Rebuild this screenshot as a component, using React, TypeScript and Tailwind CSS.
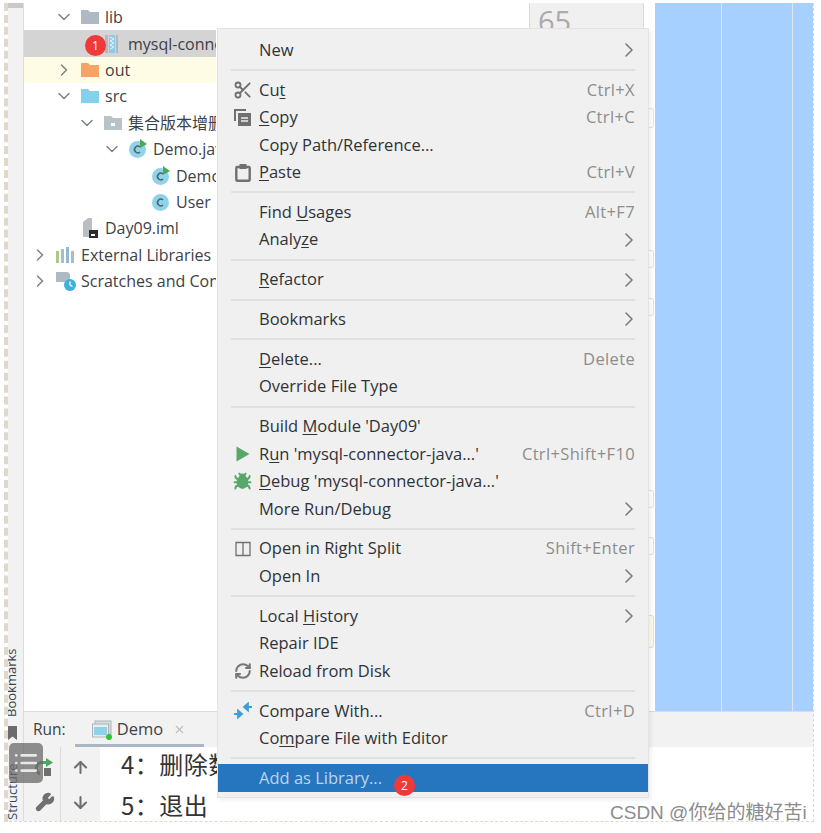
import React from "react";
import { ChevronRight, ChevronDown, RefreshCw, ArrowUp, ArrowDown, X, Wrench, Bug, List, Scissors } from "lucide-react";

const font = "[font-family:'Open_Sans','Noto_Sans_CJK_SC',sans-serif]";

function U({ children }: { children: React.ReactNode }) {
  return <span className="underline underline-offset-2">{children}</span>;
}

function Row({ icon, label, shortcut, arrow, active }: { icon?: React.ReactNode; label: React.ReactNode; shortcut?: string; arrow?: boolean; active?: boolean }) {
  return (
    <div className={`h-[27.5px] flex items-center pr-[13px] ${active ? "bg-[#2675bf] text-[#bcd6ee]" : "text-[#2f3338]"}`}>
      <div className="w-[41px] flex justify-center pl-[8px] shrink-0">{icon}</div>
      <div className="flex-1 text-[16.5px] whitespace-nowrap">{label}</div>
      {shortcut && <div className="text-[16.5px] tracking-[0.35px] text-[#8d8d8d]">{shortcut}</div>}
      {arrow && <ChevronRight size={24} strokeWidth={1.5} className="text-[#777777] mr-[-6px]" />}
    </div>
  );
}

const Sep = () => (
  <div className="h-[12.3px] flex items-center px-[13px]">
    <div className="h-[2px] w-full bg-[#e0e0e0]" />
  </div>
);

function Folder({ color, dot }: { color: string; dot?: boolean }) {
  return (
    <svg width="20" height="16" viewBox="0 0 20 16">
      <path d="M1 1h7l2 2h9v12H1z" fill={color} />
      {dot && <rect x="8" y="8" width="4" height="3" fill="#fff" />}
    </svg>
  );
}

function ClassIcon({ run }: { run?: boolean }) {
  return (
    <svg width="20" height="20" viewBox="0 0 20 20">
      <circle cx="9.5" cy="10.5" r="8.5" fill="#8fd3ea" />
      <path d="M12 8a3.3 3.3 0 1 0 0 5" fill="none" stroke="#52626c" strokeWidth="1.6" />
      {run && <path d="M12 0l7 5-7 4z" fill="#4ca75c" />}
    </svg>
  );
}

function TreeRow({ indent, chevron, icon, label, className = "" }: { indent: number; chevron?: "r" | "d"; icon: React.ReactNode; label: string; className?: string }) {
  return (
    <div className={`h-[26.4px] flex items-center whitespace-nowrap overflow-hidden text-[16px] text-[#3d4247] ${className}`} style={{ paddingLeft: indent }}>
      <div className="w-[24px] shrink-0 flex items-center">
        {chevron === "r" && <ChevronRight size={20} strokeWidth={1.8} className="text-[#7c8287] -ml-[2px]" />}
        {chevron === "d" && <ChevronDown size={20} strokeWidth={1.8} className="text-[#7c8287] -ml-[2px]" />}
      </div>
      <div className="mr-[5px] flex items-center shrink-0">{icon}</div>
      <span>{label}</span>
    </div>
  );
}

function BlueColumn({ className }: { className: string }) {
  return <div className={`bg-[#a6d0ff] ${className}`} />;
}

const gray = "#707070";

export default function App() {
  return (
    <div className={`relative w-[821px] h-[833px] bg-white overflow-hidden ${font}`}>
      <div className="ml-[4px] mt-[3px] w-[810px] h-[819px] flex border-l-[4px] border-b border-r border-dashed border-[#ded9cc]">
        {/* left strip */}
        <div className="relative w-[16px] bg-[#f2f2f2] border-r border-[#dcdcdc] shrink-0 overflow-hidden">
          <div className="h-[5px] w-[15px] bg-[#c9c9c9]" />
          <div className="absolute left-[-1px] top-[645px] h-[70px] w-[11px] flex items-center justify-center">
            <span className="rotate-[-90deg] text-[13px] text-[#3d4247] whitespace-nowrap">Bookmarks</span>
          </div>
          <svg className="absolute left-0 top-[723px]" width="9" height="14" viewBox="0 0 9 14">
            <path d="M0 0h9v14L4.500 10.500 0 14z" fill="#6b6b6b" />
          </svg>
          <div className="absolute left-[-1px] top-[760px] h-[58px] w-[11px] flex items-center justify-center">
            <span className="rotate-[-90deg] text-[13px] text-[#33475c] whitespace-nowrap">Structure</span>
          </div>
        </div>

        <div className="flex-1 flex flex-col min-w-0">
          <div className="flex-1 flex min-h-0">
            {/* project tree */}
            <div className="w-[192px] bg-white shrink-0 pt-[1px]">
              <TreeRow indent={32} chevron="d" icon={<Folder color="#aeb9c1" />} label="lib" />
              <TreeRow indent={55} icon={<svg width="20" height="20" viewBox="0 0 20 20"><rect x="2" y="1" width="3" height="18" fill="#aeb9c1" /><rect x="6" y="1" width="6" height="18" fill="#8fcbe6" /><path d="M7 3l4 2-4 2 4 2-4 2 4 2-4 2" fill="none" stroke="#e8f4fa" /><rect x="13" y="1" width="2" height="18" fill="#aeb9c1" /></svg>} label="mysql-connector-java" className="bg-[#d4d4d4]" />
              <TreeRow indent={32} chevron="r" icon={<Folder color="#f4a565" />} label="out" className="bg-[#fefce4]" />
              <TreeRow indent={32} chevron="d" icon={<Folder color="#84d1ee" />} label="src" />
              <TreeRow indent={55} chevron="d" icon={<Folder color="#b8c2c9" dot />} label="集合版本增删改查" />
              <TreeRow indent={80} chevron="d" icon={<ClassIcon run />} label="Demo.java" />
              <TreeRow indent={103} icon={<ClassIcon run />} label="Demo" />
              <TreeRow indent={103} icon={<ClassIcon />} label="User" />
              <TreeRow indent={32} icon={<svg width="20" height="20" viewBox="0 0 20 20"><path d="M3 4l5-4h4v19H3z" fill="#b7bfc5" /><rect x="9" y="12" width="9" height="8" fill="#2b2b2b" /><rect x="11" y="16" width="4" height="2" fill="#fff" /></svg>} label="Day09.iml" />
              <TreeRow indent={8} chevron="r" icon={<svg width="20" height="18" viewBox="0 0 20 18"><rect x="0" y="5" width="3" height="12" fill="#a6c98c" /><rect x="5" y="3" width="3" height="14" fill="#aeb9c1" /><rect x="10" y="1" width="3" height="16" fill="#8fb9d6" /><rect x="15" y="5" width="3" height="12" fill="#aeb9c1" /></svg>} label="External Libraries" />
              <TreeRow indent={8} chevron="r" icon={<svg width="20" height="20" viewBox="0 0 20 20"><path d="M0 1h12l2 2v8H0z" fill="#aeb9c1" /><circle cx="14" cy="14" r="6" fill="#3fb0dc" /><path d="M14 10.500V14l2.500 1.500" stroke="#fff" fill="none" strokeWidth="1.3" /></svg>} label="Scratches and Consoles" />
            </div>

            {/* editor */}
            <div className="flex-1 bg-white flex min-w-0">
              <div className="w-[313px] shrink-0" />
              <div className="w-[115px] h-[60px] bg-[#f0f0f0] border-x border-[#d9d9d9] text-[29px] text-[#ababab] pl-[8px] leading-[36px] shrink-0">65</div>
              <div className="w-[11px] shrink-0" />
              <div className="flex-1 flex gap-[1px] bg-[#dbe6f0]">
                <BlueColumn className="w-[66px]" />
                <BlueColumn className="w-[70px]" />
                <BlueColumn className="flex-1" />
              </div>
            </div>
          </div>

          {/* run bar */}
          <div className="h-[36px] bg-[#f2f2f2] border-t border-[#dcdcdc] flex items-center shrink-0 text-[#3d4247]">
            <span className="ml-[9px] text-[15.500px]">Run:</span>
            <div className="relative ml-[25px] h-full flex items-center px-[1px]">
              <svg width="20" height="20" viewBox="0 0 20 20"><rect x="3" y="1" width="16" height="13" fill="#d7dcdf" stroke="#aeb4b8" /><rect x="0.5" y="4" width="16" height="13" fill="#e8edf0" stroke="#aeb4b8" /><rect x="2" y="7" width="13" height="8" fill="#8fd3ea" /><circle cx="17" cy="17" r="3" fill="#2fc52f" /></svg>
              <span className="ml-[5px] text-[16.500px]">Demo</span>
              <X size={13} className="ml-[10px] text-[#b9bdc0]" />
              <div className="absolute left-[-16px] right-[-17px] bottom-0 h-[3px] bg-[#aab6c4]" />
            </div>
          </div>

          {/* console */}
          <div className="h-[74px] flex shrink-0">
            <div className="w-[37px] bg-[#f2f2f2] border-r border-[#dcdcdc] flex flex-col items-center justify-end pb-[9px] pl-[6px] shrink-0">
              <Wrench size={20} fill={gray} className="text-[#707070]" />
            </div>
            <div className="w-[39px] bg-[#f2f2f2] flex flex-col items-center justify-between pt-[11px] pb-[9px] shrink-0">
              <ArrowUp size={19} strokeWidth={2.6} className="text-[#6e6e6e]" />
              <ArrowDown size={19} strokeWidth={2.6} className="text-[#6e6e6e]" />
            </div>
            <div className="flex-1 bg-white pl-[21px] text-[24px] tracking-[0.5px] leading-[41px] text-[#333333] [font-family:'Noto_Sans_CJK_SC',sans-serif] whitespace-nowrap overflow-hidden">
              <div className="-mt-[4px]">4：删除数据</div>
              <div>5：退出</div>
            </div>
          </div>
        </div>
      </div>

      {/* re-run icon under the overlay button */}
      <svg className="absolute left-[35px] top-[758px]" width="18" height="18" viewBox="0 0 18 18">
        <path d="M12 4.500H8A6 6 0 0 0 5 16" fill="none" stroke="#4ca75c" strokeWidth="3" />
        <path d="M11 0l7 4.500-7 4.500z" fill="#4ca75c" />
        <rect x="9" y="10" width="7" height="8" fill="#6f6f6f" />
      </svg>

      {/* floating list button */}
      <div className="absolute left-[9px] top-[743px] w-[34px] h-[40px] rounded-[5px] bg-[#6a6a6a]/75 flex items-center justify-center">
        <List size={26} strokeWidth={2.4} className="text-[#e8e8e8]" />
      </div>

      {/* fold markers peeking out beside the menu */}
      <div className="absolute left-[649px] top-[108px] h-[20px] w-[5px] rounded-r-[3px] border border-l-0 border-[#e2e2e2]" />
      <div className="absolute left-[649px] top-[250px] h-[18px] w-[5px] rounded-r-[3px] border border-l-0 border-[#e2e2e2]" />
      <div className="absolute left-[649px] top-[298px] h-[18px] w-[5px] rounded-r-[3px] border border-l-0 border-[#e2e2e2]" />
      <div className="absolute left-[649px] top-[490px] h-[18px] w-[5px] rounded-r-[3px] border border-l-0 border-[#e2e2e2]" />
      <div className="absolute left-[649px] top-[537px] h-[18px] w-[5px] rounded-r-[3px] border border-l-0 border-[#e2e2e2]" />
      <div className="absolute left-[649px] top-[615px] h-[33px] w-[5px] bg-[#fdfbee] rounded-r-[3px] border border-l-0 border-[#e2e2e2]" />

      {/* context menu */}
      <div className="absolute left-[217px] top-[28px] w-[432px] h-[770px] bg-[#f0f0f0] border border-[#e3e3e3] pt-[7.5px] shadow-[3px_3px_3px_rgba(0,0,0,0.05)]">
        <Row label="New" arrow />
        <Sep />
        <Row icon={<Scissors size={20} strokeWidth={2.2} className="text-[#707070]" />} label={<>Cu<U>t</U></>} shortcut="Ctrl+X" />
        <Row icon={<svg width="18" height="18" viewBox="0 0 18 18"><path d="M1 12V1h11" fill="none" stroke={gray} strokeWidth="2" /><rect x="4" y="4" width="13" height="13" fill={gray} /><path d="M7 9h7M7 12h7" stroke="#f0f0f0" strokeWidth="1.4" /></svg>} label={<><U>C</U>opy</>} shortcut="Ctrl+C" />
        <Row label="Copy Path/Reference..." />
        <Row icon={<svg width="16" height="18" viewBox="0 0 16 18"><rect x="1.300" y="3" width="13.400" height="13.800" rx="1" fill="none" stroke={gray} strokeWidth="2.400" /><rect x="4.500" y="0" width="7" height="5" fill={gray} /></svg>} label={<><U>P</U>aste</>} shortcut="Ctrl+V" />
        <Sep />
        <Row label={<>Find <U>U</U>sages</>} shortcut="Alt+F7" />
        <Row label={<>Analy<U>z</U>e</>} arrow />
        <Sep />
        <Row label={<><U>R</U>efactor</>} arrow />
        <Sep />
        <Row label="Bookmarks" arrow />
        <Sep />
        <Row label={<><U>D</U>elete...</>} shortcut="Delete" />
        <Row label="Override File Type" />
        <Sep />
        <Row label={<>Build <U>M</U>odule 'Day09'</>} />
        <Row icon={<svg width="14" height="16" viewBox="0 0 14 16"><path d="M0.500 0.500L13.500 8 0.500 15.500z" fill="#58a869" /></svg>} label={<>R<U>u</U>n 'mysql-connector-java...'</>} shortcut="Ctrl+Shift+F10" />
        <Row icon={<Bug size={19} strokeWidth={2.4} fill="#58a869" className="text-[#58a869]" />} label={<><U>D</U>ebug 'mysql-connector-java...'</>} />
        <Row label="More Run/Debug" arrow />
        <Sep />
        <Row icon={<svg width="16" height="16" viewBox="0 0 16 16"><path d="M1 1.500h14v13H1zM8 1.500v13" fill="none" stroke={gray} strokeWidth="1.300" /></svg>} label="Open in Right Split" shortcut="Shift+Enter" />
        <Row label="Open In" arrow />
        <Sep />
        <Row label={<>Local <U>H</U>istory</>} arrow />
        <Row label="Repair IDE" />
        <Row icon={<RefreshCw size={18} strokeWidth={2.8} className="text-[#777777]" />} label="Reload from Disk" />
        <Sep />
        <Row icon={<svg width="20" height="18" viewBox="0 0 20 18"><path d="M1 12h6M5 8.500l4 3.500-4 3.500zM19 5h-6M15 1.500L11 5l4 3.500z" fill="#3e9fd8" stroke="#3e9fd8" strokeWidth="1.800" /></svg>} label="Compare With..." shortcut="Ctrl+D" />
        <Row label={<>Co<U>m</U>pare File with Editor</>} />
        <Sep />
        <Row label="Add as Library..." active />
      </div>

      {/* number badges */}
      <div className="absolute left-[85px] top-[35px] w-[21px] h-[21px] rounded-full bg-[#f03a3a] text-white text-[12px] flex items-center justify-center">1</div>
      <div className="absolute left-[394px] top-[775px] w-[21px] h-[21px] rounded-full bg-[#f03a3a] text-white text-[12px] flex items-center justify-center">2</div>

      {/* watermark */}
      <div className="absolute left-[610px] top-[803px] text-[19px] leading-[20px] text-[#8c8c8c] whitespace-nowrap [font-family:'Liberation_Sans','Noto_Sans_CJK_SC',sans-serif]">CSDN @你给的糖好苦i</div>
    </div>
  );
}
